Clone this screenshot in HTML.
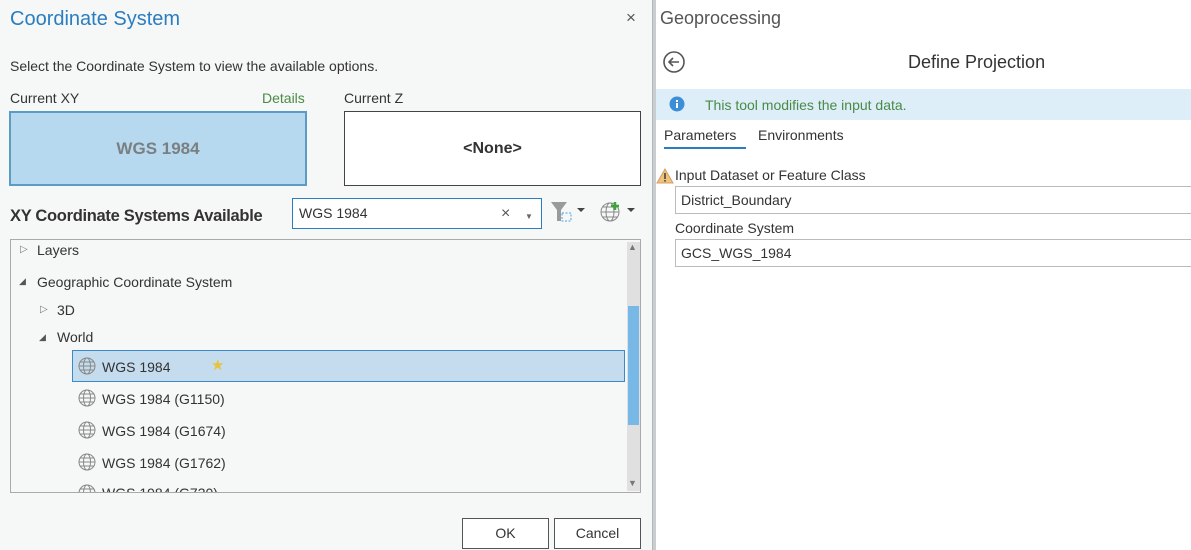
<!DOCTYPE html>
<html><head><meta charset="utf-8"><style>
*{margin:0;padding:0;box-sizing:border-box}
body{width:1191px;height:550px;overflow:hidden;background:#fff;font-family:"Liberation Sans",sans-serif;color:#333;position:relative}
.a{position:absolute;white-space:nowrap}
#left{position:absolute;left:0;top:0;width:652px;height:550px;background:#f6f7f7}
#sep{position:absolute;left:652px;top:0;width:4px;height:550px;background:#c9cdd0;border-left:1px solid #b5b8ba}
.row{font-size:14px}
</style></head><body>
<div id="left">
<div class="a" style="left:10px;top:8px;font-size:20px;color:#2a7dc0">Coordinate System</div>
<div class="a" style="left:626px;top:8px;font-size:17px;color:#555">×</div>
<div class="a" style="left:10px;top:58px;font-size:14px">Select the Coordinate System to view the available options.</div>
<div class="a" style="left:10px;top:90px;font-size:14px">Current XY</div>
<div class="a" style="left:262px;top:90px;font-size:14px;color:#4a8a46">Details</div>
<div class="a" style="left:9px;top:111px;width:298px;height:75px;background:#b7d9ef;border:2px solid #5b9bc4;font-size:17px;font-weight:bold;color:#7a7f82;text-align:center;line-height:71px">WGS 1984</div>
<div class="a" style="left:344px;top:90px;font-size:14px">Current Z</div>
<div class="a" style="left:344px;top:111px;width:297px;height:75px;background:#fff;border:1px solid #444;font-size:16px;font-weight:bold;color:#333;text-align:center;line-height:73px">&lt;None&gt;</div>
<div class="a" style="left:10px;top:207px;font-size:16.5px;font-weight:bold;color:#333;letter-spacing:-0.3px">XY Coordinate Systems Available</div>
<div class="a" style="left:292px;top:198px;width:250px;height:31px;background:#fff;border:1px solid #2a7dc0;font-size:14px;line-height:29px;padding-left:6px">WGS 1984
<span style="position:absolute;left:208px;top:0;font-size:16px;color:#555">×</span>
<span style="position:absolute;left:232px;top:3px;font-size:8px;color:#666">▼</span></div>
<svg class="a" style="left:549px;top:199px" width="40" height="26"><path d="M2 3h16l-6 8v11h-4v-11z" fill="#9a9a9a"/><rect x="13" y="14" width="9" height="8" fill="none" stroke="#4aa0e0" stroke-dasharray="2,1.5"/><path d="M28 9h8l-4 4z" fill="#444"/></svg>
<svg class="a" style="left:599px;top:199px" width="40" height="26"><circle cx="11" cy="13" r="9" fill="none" stroke="#888"/><ellipse cx="11" cy="13" rx="4" ry="9" fill="none" stroke="#888"/><path d="M2 13h18M4 8h14M4 18h14" stroke="#888"/><path d="M16 3v8M12 7h8" stroke="#3ba53b" stroke-width="2.5"/><path d="M28 9h8l-4 4z" fill="#444"/></svg>
<div class="a" style="left:10px;top:239px;width:631px;height:254px;border:1px solid #aaa;background:#f6f7f7;overflow:hidden">
 <div class="a" style="left:616px;top:2px;width:13px;height:249px;background:#e0e0e0"></div>
 <div class="a" style="left:617px;top:66px;width:11px;height:119px;background:#78b8e6"></div>
 <div class="a" style="left:617px;top:2px;font-size:9px;color:#777">▲</div>
 <div class="a" style="left:617px;top:238px;font-size:9px;color:#777">▼</div>
 <div class="a" style="left:9px;top:4px;font-size:10px;color:#777">▷</div>
 <div class="a row" style="left:26px;top:2px">Layers</div>
 <div class="a" style="left:8px;top:36px;font-size:9px;color:#555">◢</div>
 <div class="a row" style="left:26px;top:34px">Geographic Coordinate System</div>
 <div class="a" style="left:29px;top:64px;font-size:10px;color:#777">▷</div>
 <div class="a row" style="left:46px;top:62px">3D</div>
 <div class="a" style="left:28px;top:92px;font-size:9px;color:#555">◢</div>
 <div class="a row" style="left:46px;top:89px">World</div>
 <div class="a" style="left:61px;top:110px;width:553px;height:32px;background:#c4dcee;border:1px solid #3a8ac7"></div>
 <div class="a" style="left:200px;top:116px;font-size:15px;color:#e6c33a">★</div>
 <div class="a row" style="left:91px;top:119px">WGS 1984</div>
 <div class="a row" style="left:91px;top:151px">WGS 1984 (G1150)</div>
 <div class="a row" style="left:91px;top:183px">WGS 1984 (G1674)</div>
 <div class="a row" style="left:91px;top:215px">WGS 1984 (G1762)</div>
 <div class="a row" style="left:91px;top:245px">WGS 1984 (G730)</div>
 <svg class="a" style="left:66px;top:116px" width="20" height="150"><g fill="none" stroke="#888"><g id="g"><circle cx="10" cy="10" r="8"/><ellipse cx="10" cy="10" rx="3.5" ry="8"/><path d="M2 10h16M3.5 6h13M3.5 14h13"/></g><use href="#g" y="32"/><use href="#g" y="64"/><use href="#g" y="96"/><use href="#g" y="127"/></g></svg>
</div>
<div class="a" style="left:462px;top:518px;width:87px;height:31px;border:1px solid #555;background:#fff;font-size:14px;text-align:center;line-height:29px">OK</div>
<div class="a" style="left:554px;top:518px;width:87px;height:31px;border:1px solid #555;background:#fff;font-size:14px;text-align:center;line-height:29px">Cancel</div>
</div>
<div id="sep"></div>
<div class="a" style="left:660px;top:8px;font-size:18px;color:#555">Geoprocessing</div>
<svg class="a" style="left:662px;top:50px" width="24" height="24"><circle cx="12" cy="12" r="10" fill="none" stroke="#555" stroke-width="1.6"/><path d="M17 12H7M11 8l-4 4 4 4" fill="none" stroke="#555" stroke-width="1.6"/></svg>
<div class="a" style="left:908px;top:52px;font-size:18px;color:#333">Define Projection</div>
<div class="a" style="left:656px;top:89px;width:535px;height:31px;background:#ddeef8"></div>
<svg class="a" style="left:669px;top:96px" width="16" height="16"><circle cx="8" cy="8" r="7.5" fill="#3c8fd6"/><rect x="7" y="7" width="2" height="5" fill="#fff"/><rect x="7" y="4" width="2" height="2" fill="#fff"/></svg>
<div class="a" style="left:705px;top:97px;font-size:14px;color:#4a8a46">This tool modifies the input data.</div>
<div class="a" style="left:664px;top:127px;font-size:14px;color:#333">Parameters</div>
<div class="a" style="left:758px;top:127px;font-size:14px;color:#333">Environments</div>
<div class="a" style="left:664px;top:147px;width:82px;height:2px;background:#2a7dc0"></div>
<svg class="a" style="left:656px;top:168px" width="18" height="16"><path d="M9 1L17 15H1z" fill="#f1c27d" stroke="#d0a060"/><rect x="8.2" y="5" width="1.6" height="6" fill="#444"/><rect x="8.2" y="12" width="1.6" height="1.6" fill="#444"/></svg>
<div class="a" style="left:675px;top:167px;font-size:14px">Input Dataset or Feature Class</div>
<div class="a" style="left:675px;top:186px;width:520px;height:28px;border:1px solid #bbb;font-size:14px;line-height:26px;padding-left:5px">District_Boundary</div>
<div class="a" style="left:675px;top:220px;font-size:14px">Coordinate System</div>
<div class="a" style="left:675px;top:239px;width:520px;height:28px;border:1px solid #bbb;font-size:14px;line-height:26px;padding-left:5px">GCS_WGS_1984</div>
</body></html>
